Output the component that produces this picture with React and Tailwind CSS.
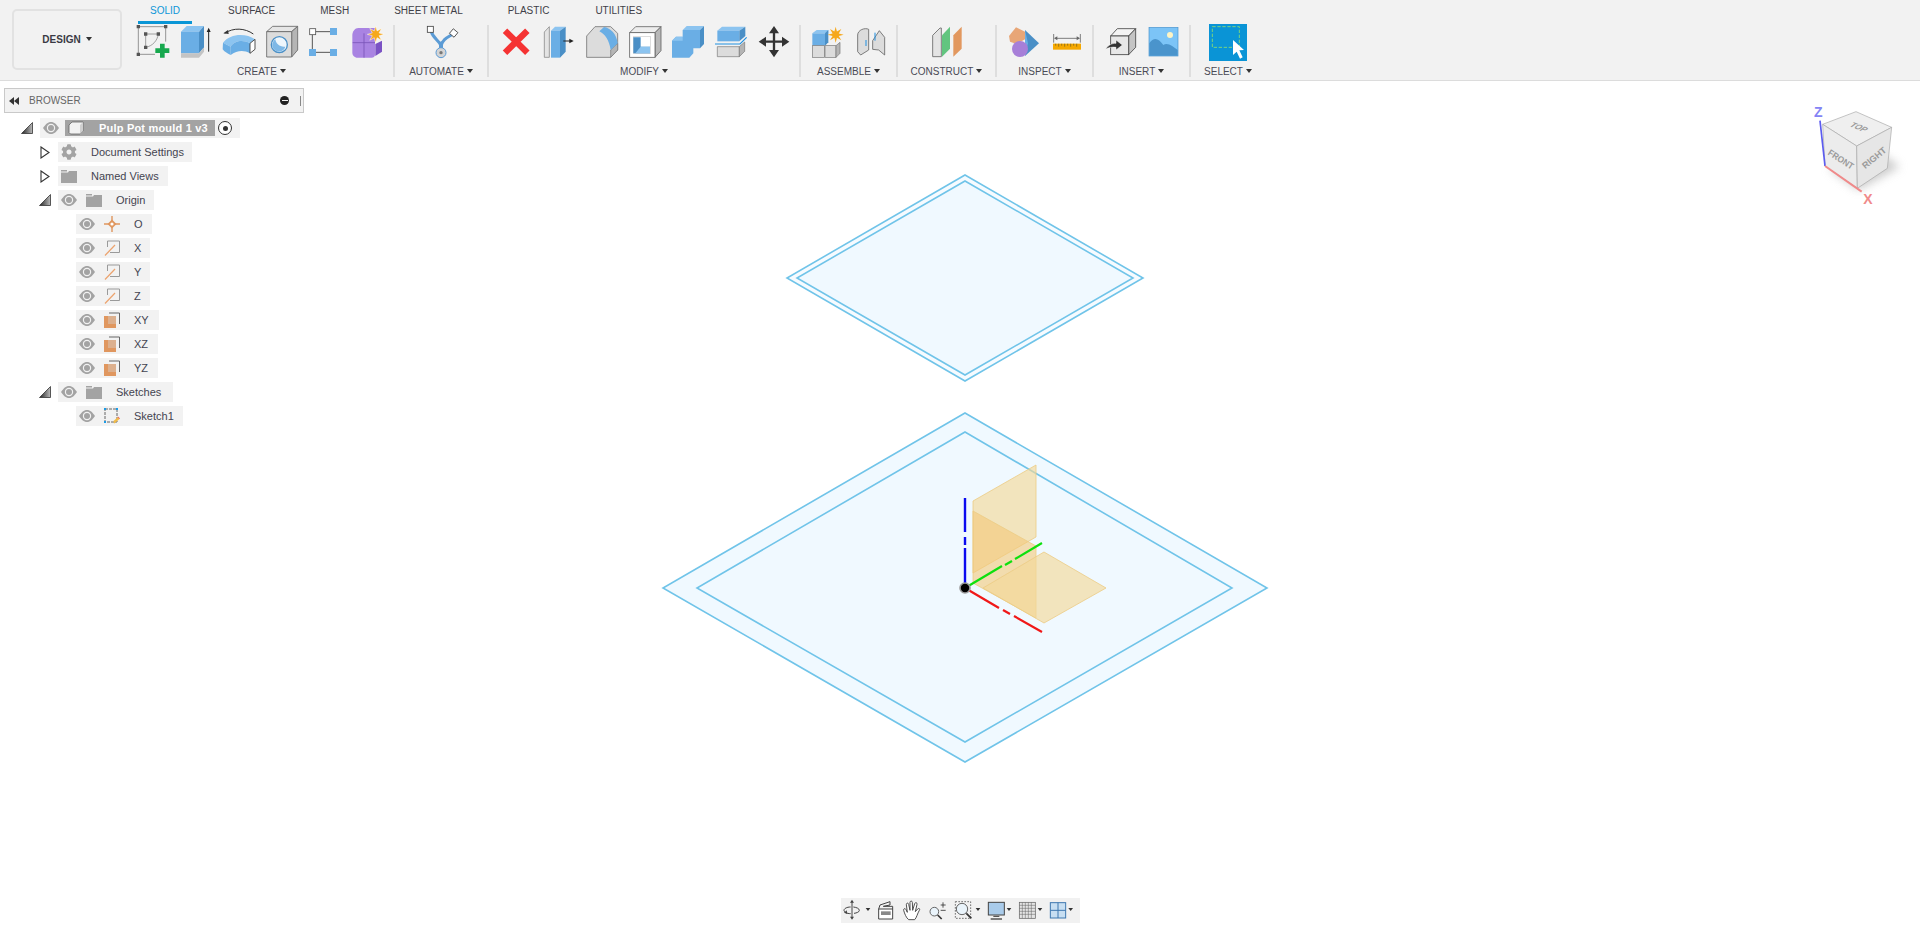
import React from 'react';
import { FaCog } from 'react-icons/fa';

// star points for the little "new" bursts on the ribbon icons
const star = (cx, cy, r1, r2, n = 8) => {
  const pts = [];
  for (let i = 0; i < n * 2; i++) {
    const r = i % 2 ? r2 : r1;
    const a = (Math.PI * i) / n - Math.PI / 2;
    pts.push(`${cx + r * Math.cos(a)},${cy + r * Math.sin(a)}`);
  }
  return pts.join(' ');
};

// ribbon icon, drawn at 3x so the numbers stay easy to read
function Ico({ x, children }) {
  return (
    <svg width="44" height="38" viewBox={`${x} 72 132 114`} className="shrink-0">
      {children}
    </svg>
  );
}

function Caret() {
  return <span className="ml-[3px] inline-block border-x-[3px] border-t-[4px] border-x-transparent border-t-[#333] align-[2px]" />;
}

function Group({ className, pad, label, children }) {
  return (
    <div className={`flex shrink-0 flex-col ${className}`}>
      <div className={`flex h-[38px] ${pad}`}>{children}</div>
      <div className="mt-[3px] text-center text-[10px] leading-[14px] text-[#4a4a55]">
        {label}
        <Caret />
      </div>
    </div>
  );
}

function Sep() {
  return <div className="mt-[1px] h-[52px] w-[2px] shrink-0 bg-[#dedede]" />;
}

function Tab({ label, active, className = '' }) {
  return (
    <div className={`relative px-[23px] text-[10px] leading-[20px] ${className}`}>
      <span className={active ? 'text-[#0c96d8]' : 'text-[#3f3f48]'}>{label}</span>
      {active && <div className="absolute bottom-[-3px] left-[11px] h-[3px] w-[54px] bg-[#0a96d6]" />}
    </div>
  );
}

function Toolbar() {
  return (
    <div className="flex h-[81px] shrink-0 border-b border-[#dcdcdc] bg-[#f2f2f2] font-['Liberation_Sans',sans-serif]">
      <div className="ml-[12px] mt-[9px] flex h-[61px] w-[110px] shrink-0 items-center justify-center rounded-[5px] border-2 border-[#e2e2e2] text-[10px] font-bold text-[#3a3a44]">
        DESIGN
        <span className="ml-[2px]"><Caret /></span>
      </div>
      <div className="ml-[5px] flex flex-col">
        <div className="flex h-[21px] pt-px">
          <Tab label="SOLID" active />
          <Tab label="SURFACE" className="ml-[2px]" />
          <Tab label="MESH" className="ml-[-1px]" />
          <Tab label="SHEET METAL" className="ml-[-1px]" />
          <Tab label="PLASTIC" className="ml-[-1px]" />
          <Tab label="UTILITIES" />
        </div>
        <div className="mt-[3px] ml-[3px] flex">
          <Group className="w-[263px]" pad="" label="CREATE">
            <Ico x={390}>
              <path d="M415 80H497V125M415 80V163H465" fill="none" stroke="#666" strokeWidth="2" />
              <path d="M437 102H475M437 102V142M475 102C472 122 458 138 437 142" fill="none" stroke="#777" strokeWidth="2" />
              <path d="M410 75h10v10h-10zM492 75h10v10h-10zM410 158h10v10h-10zM432 97h10v10h-10zM470 97h10v10h-10zM432 137h10v10h-10z" fill="#555" />
              <path d="M466 145h14v-14h14v14h14v14h-14v14h-14v-14h-14z" fill="#17a84e" />
            </Ico>
            <Ico x={522}>
              <path d="M543 95L560 78H612L597 95Z" fill="#8cc4f0" />
              <path d="M543 95H597V160H543Z" fill="#6aaee5" />
              <path d="M597 95L612 78V142L597 160Z" fill="#4a8fc6" />
              <path d="M543 160H597L612 142V155L597 173H543Z" fill="#c4c4c4" />
              <path d="M626 155V88" stroke="#222" strokeWidth="3" />
              <path d="M620 96L626 83L632 96Z" fill="#222" />
            </Ico>
            <Ico x={654}>
              <path d="M674 100C700 82 735 84 760 102" fill="none" stroke="#333" strokeWidth="3" />
              <path d="M670 100L684 90L686 102Z" fill="#333" />
              <path d="M669 128C690 100 738 98 765 118L750 130C730 118 702 122 692 140Z" fill="#8cc4f0" />
              <path d="M669 128L692 140V165C685 162 672 155 668 148Z" fill="#6aaee5" />
              <path d="M692 140C702 122 730 118 750 130V160C730 148 710 152 692 165Z" fill="#6aaee5" />
              <path d="M750 130L765 118V148L750 160Z" fill="#fff" stroke="#333" strokeWidth="2.5" />
            </Ico>
            <Ico x={786}>
              <path d="M800 95L818 79H893L875 95Z" fill="#e6e6e6" stroke="#666" strokeWidth="2.5" />
              <path d="M875 95L893 79V150L875 171Z" fill="#b5b5b5" stroke="#666" strokeWidth="2.5" />
              <path d="M800 95H875V171H800Z" fill="#dcdcdc" stroke="#666" strokeWidth="2.5" />
              <circle cx="838" cy="134" r="24" fill="#eef6fc" stroke="#4a8fc6" strokeWidth="4" />
              <path d="M826 118A20 20 0 1 0 856 140C840 142 828 132 826 118Z" fill="#7eb8e6" />
            </Ico>
            <Ico x={918}>
              <path d="M946 95H992M937 104V148M946 157H992" stroke="#555" strokeWidth="3" />
              <rect x="929" y="86" width="18" height="18" fill="#fff" stroke="#555" strokeWidth="2.5" />
              <rect x="990" y="84" width="21" height="21" fill="#6aaee5" />
              <rect x="927" y="147" width="21" height="21" fill="#6aaee5" />
              <rect x="990" y="147" width="21" height="21" fill="#6aaee5" />
            </Ico>
            <Ico x={1050}>
              <path d="M1075 84H1125V165C1125 170 1120 173 1115 173H1072C1064 173 1057 166 1057 158V105C1057 95 1065 84 1075 84Z" fill="#a983e2" />
              <path d="M1058 128H1125M1092 100V173" stroke="#7a55b8" strokeWidth="2.5" />
              <path d="M1126 132L1146 122V155L1126 168Z" fill="#7b52c4" />
              <polygon points={star(1127, 103, 25, 11, 8)} fill="#f6a81c" stroke="#fff" strokeWidth="1.5" />
            </Ico>
          </Group>
          <Sep />
          <Group className="w-[92px]" pad="pl-[25px]" label="AUTOMATE">
            <Ico x={1257}>
              <path d="M1290 92C1296 118 1314 118 1320 138M1356 102C1340 112 1324 118 1320 138" fill="none" stroke="#5b9bd5" strokeWidth="9" />
              <path d="M1320 125V150" stroke="#5b9bd5" strokeWidth="12" />
              <circle cx="1320" cy="158" r="15" fill="#d4d4d4" stroke="#5b9bd5" strokeWidth="3" />
              <circle cx="1320" cy="158" r="5" fill="#777" />
              <rect x="1279" y="79" width="18" height="18" fill="#fff" stroke="#444" strokeWidth="2.5" />
              <rect x="1349" y="90" width="18" height="18" fill="#fff" stroke="#444" strokeWidth="2.5" transform="rotate(40 1358 99)" />
            </Ico>
          </Group>
          <Sep />
          <Group className="w-[310px]" pad="pl-[1px]" label="MODIFY">
            <Ico x={30}>
              <path d="M75 92L142 158M142 92L75 158" stroke="#f53333" strokeWidth="19" />
            </Ico>
            <Ico x={162}>
              <path d="M193 96L208 80V172H193Z" fill="#e4e4e4" stroke="#777" strokeWidth="2" />
              <path d="M213 92L225 80H257L240 92Z" fill="#8cc4f0" />
              <path d="M213 92H240V173H213Z" fill="#6aaee5" />
              <path d="M240 92L257 80V155L240 173Z" fill="#4a8fc6" />
              <path d="M250 123H272" stroke="#222" strokeWidth="3" />
              <path d="M268 116L281 123L268 130Z" fill="#222" />
            </Ico>
            <Ico x={294}>
              <path d="M320 108L345 80H392L413 100V150L392 172H320Z" fill="#dcdcdc" stroke="#777" strokeWidth="2.5" />
              <path d="M392 172V150L413 130V150Z" fill="#b5b5b5" stroke="#777" strokeWidth="2" />
              <path d="M358 94L372 81C392 84 410 102 413 130L392 150C388 122 375 102 358 94Z" fill="#6aaee5" />
            </Ico>
            <Ico x={426}>
              <path d="M449 98L467 80H543L525 98Z" fill="#ededed" stroke="#666" strokeWidth="2.5" />
              <path d="M525 98L543 80V152L525 172Z" fill="#b8b8b8" stroke="#666" strokeWidth="2.5" />
              <rect x="449" y="98" width="76" height="74" fill="#fff" stroke="#666" strokeWidth="2.5" />
              <rect x="460" y="110" width="52" height="50" fill="#fff" stroke="#ccc" strokeWidth="2" />
              <path d="M460 112H482V140H510L510 160H460Z" fill="#4a8fc6" />
              <path d="M482 140H510V160H466Z" fill="#8cc4f0" />
            </Ico>
            <Ico x={558}>
              <path d="M608 90L620 78H672L660 90Z" fill="#8cc4f0" />
              <path d="M660 90L672 78V132L660 145Z" fill="#4a8fc6" />
              <path d="M576 122L588 110H608V90H660V145H640V160L628 173H576Z" fill="#6aaee5" />
              <path d="M576 122L588 110H608V122Z" fill="#8cc4f0" />
            </Ico>
            <Ico x={690}>
              <path d="M712 92L726 80H796L778 92Z" fill="#8cc4f0" />
              <path d="M712 92H778V124H712Z" fill="#6aaee5" />
              <path d="M778 92L796 80V108L778 124Z" fill="#4a8fc6" />
              <path d="M712 140H778V170H712Z" fill="#dcdcdc" stroke="#777" strokeWidth="2" />
              <path d="M778 140L794 126V154L778 170Z" fill="#b5b5b5" stroke="#777" strokeWidth="2" />
              <path d="M705 132H780L800 112" fill="none" stroke="#1f8fe0" strokeWidth="3.5" />
            </Ico>
            <Ico x={822}>
              <path d="M882 96V154M850 125H914" stroke="#333" strokeWidth="7" />
              <path d="M882 78L897 100H867ZM882 172L897 150H867ZM836 125L858 110V140ZM928 125L906 110V140Z" fill="#333" />
            </Ico>
          </Group>
          <Sep />
          <Group className="w-[95px]" pad="pl-[4px]" label="ASSEMBLE">
            <Ico x={975}>
              <path d="M997 100L1010 90H1045V100Z" fill="#8cc4f0" />
              <rect x="997" y="100" width="38" height="37" fill="#6aaee5" />
              <path d="M1035 100L1045 90V127L1035 137Z" fill="#4a8fc6" />
              <rect x="997" y="137" width="36" height="35" fill="#dcdcdc" stroke="#777" strokeWidth="2" />
              <rect x="1035" y="137" width="33" height="35" fill="#dcdcdc" stroke="#777" strokeWidth="2" />
              <path d="M1068 137L1080 127V160L1068 172Z" fill="#b5b5b5" stroke="#777" strokeWidth="2" />
              <polygon points={star(1067, 104, 24, 10, 8)} fill="#f6a81c" />
            </Ico>
            <Ico x={1107}>
              <path d="M1133 105C1133 90 1155 82 1166 88V150L1142 165L1133 155Z" fill="#dcdcdc" stroke="#666" strokeWidth="2.5" />
              <path d="M1178 122L1198 92L1214 112V165L1196 150L1178 148Z" fill="#dcdcdc" stroke="#666" strokeWidth="2.5" />
              <path d="M1158 120V138M1185 98V122" stroke="#1f8fe0" strokeWidth="3" />
            </Ico>
          </Group>
          <Sep />
          <Group className="w-[97px]" pad="pl-[28px]" label="CONSTRUCT">
            <Ico x={1338}>
              <path d="M1358 106L1380 84H1384V170H1358Z" fill="#e4e4e4" stroke="#666" strokeWidth="2.5" />
              <path d="M1386 106L1410 80V146L1386 170Z" fill="#62c57f" />
              <path d="M1420 106L1445 80V146L1420 170Z" fill="#e2985f" />
            </Ico>
          </Group>
          <Sep />
          <Group className="w-[95px]" pad="pl-[5px]" label="INSPECT">
            <Ico x={126}>
              <polygon points="147,108 168,82 195,95 195,118 170,132 150,125" fill="#e8a677" />
              <polygon points="195,90 237,130 195,168" fill="#4a8fc6" />
              <polygon points="195,90 204,130 195,168" fill="#6aaee5" />
              <circle cx="180" cy="147" r="24" fill="#a77fd8" />
            </Ico>
            <Ico x={258}>
              <path d="M281 102V128M361 102V128" stroke="#666" strokeWidth="2.5" />
              <path d="M286 115H356" stroke="#666" strokeWidth="2.5" />
              <path d="M282 115L292 109V121ZM360 115L350 109V121Z" fill="#666" />
              <rect x="279" y="131" width="84" height="18" fill="#f5a800" />
              <path d="M287 131v6M296 131v9M305 131v6M314 131v9M323 131v6M332 131v9M341 131v6M350 131v9" stroke="#6b5a20" strokeWidth="2" />
            </Ico>
          </Group>
          <Sep />
          <Group className="w-[95px]" pad="pl-[5px]" label="INSERT">
            <Ico x={417}>
              <path d="M452 108L472 86H527L506 108Z" fill="#f4f4f4" stroke="#444" strokeWidth="2.5" />
              <path d="M506 108L527 86V142L506 164Z" fill="#c4c4c4" stroke="#444" strokeWidth="2.5" />
              <rect x="452" y="108" width="54" height="56" fill="#e8e8e8" stroke="#444" strokeWidth="2.5" />
              <path d="M437 148C445 135 455 130 468 130V120L487 135L468 150V142C455 140 447 143 437 148Z" fill="#333" stroke="#fff" strokeWidth="1.5" />
            </Ico>
            <Ico x={549}>
              <rect x="567" y="82" width="87" height="86" fill="#7cc4f7" stroke="#4a94cc" strokeWidth="2" />
              <path d="M568 130C582 110 595 115 610 135C622 125 640 140 653 150V167H568Z" fill="#4a94cc" />
              <circle cx="630" cy="105" r="9" fill="#fff4c4" />
            </Ico>
          </Group>
          <Sep />
          <Group className="w-[74px]" pad="pl-[15px]" label="SELECT">
            <Ico x={738}>
              <rect x="747" y="69" width="114" height="114" fill="#0a94d6" />
              <rect x="757" y="80" width="81" height="62" fill="none" stroke="#8fe06f" strokeWidth="2.5" strokeDasharray="10 5" />
              <path d="M819 120V165L830 155L840 176L848 172L838 151L852 150Z" fill="#fff" />
            </Ico>
          </Group>
        </div>
      </div>
    </div>
  );
}

function Eye() {
  return (
    <svg width="16" height="12" viewBox="0 0 16 12" className="shrink-0">
      <path d="M0 6C3 1.5 5.5 0 8 0S13 1.5 16 6C13 10.5 10.5 12 8 12S3 10.5 0 6Z" fill="#a3a3a3" />
      <circle cx="8" cy="6" r="4.2" fill="#f2f2f2" />
      <circle cx="8" cy="6" r="3" fill="#a3a3a3" />
    </svg>
  );
}

function Folder() {
  return (
    <svg width="16" height="14" viewBox="0 0 16 14" className="shrink-0">
      <path d="M0 1H6V2.5H0ZM0 3.5H7L8 2H16V14H0Z" fill="#a3a3a3" />
    </svg>
  );
}

function Gear() {
  return <FaCog size={16} color="#a3a3a3" className="shrink-0" />;
}

function OriginPoint() {
  return (
    <svg width="16" height="16" viewBox="0 0 16 16" className="shrink-0">
      <path d="M8 0V5M8 11V16M0 8H5M11 8H16" stroke="#e0975f" strokeWidth="1.4" />
      <path d="M8 3.5L12.5 8L8 12.5L3.5 8Z" fill="#e0975f" />
      <circle cx="8" cy="8" r="1.6" fill="#fff" />
    </svg>
  );
}

function AxisIcon() {
  return (
    <svg width="16" height="16" viewBox="0 0 16 16" className="shrink-0">
      <path d="M3.5 1H15.5V12.5H6" fill="none" stroke="#9a9a9a" strokeWidth="1" />
      <path d="M3.5 1V7" stroke="#9a9a9a" strokeWidth="1" />
      <path d="M1 15.5L11 5" stroke="#eca36e" strokeWidth="1.2" />
    </svg>
  );
}

function PlaneIcon() {
  return (
    <svg width="16" height="16" viewBox="0 0 16 16" className="shrink-0">
      <path d="M5 1H15.5V12" fill="none" stroke="#666" strokeWidth="1" />
      <rect x="0" y="4" width="12" height="12" fill="#e0975f" />
      <rect x="4" y="4" width="8" height="8" fill="#dcb08e" />
    </svg>
  );
}

function SketchIcon() {
  return (
    <svg width="16" height="16" viewBox="0 0 16 16" className="shrink-0">
      <rect x="1" y="1" width="12" height="13" fill="none" stroke="#555" strokeWidth="0.9" strokeDasharray="3 1" />
      <path d="M0 0h2v2H0zM12 0h2v2h-2zM0 13h2v2H0z" fill="#1c9be6" />
      <path d="M10 15.5L9.5 13L14 9L15.5 11L11 15Z" fill="#f2bc4a" />
      <path d="M14 8.5L16 10.5L15.5 11L13.5 9Z" fill="#ea4f4f" />
    </svg>
  );
}

function Expander({ open }) {
  if (open) {
    return (
      <svg width="12" height="12" viewBox="0 0 12 12" className="ml-[1px]">
        <defs>
          <linearGradient id="tri" x1="0" y1="0" x2="1" y2="0">
            <stop offset="0" stopColor="#222" />
            <stop offset="1" stopColor="#bbb" />
          </linearGradient>
        </defs>
        <path d="M0.5 11.5L11.5 0.5V11.5Z" fill="url(#tri)" stroke="#333" strokeWidth="0.8" />
      </svg>
    );
  }
  return (
    <svg width="10" height="13" viewBox="0 0 10 13" className="ml-[2px]">
      <path d="M1 1L9 6.5L1 12Z" fill="#fff" stroke="#333" strokeWidth="1.1" />
    </svg>
  );
}

function Row({ level, exp, eye = true, icon, label, pad = 'pr-[9px]' }) {
  const indent = level === 1 ? 'pl-[32px]' : 'pl-[50px]';
  return (
    <div className={`flex h-5 ${indent}`}>
      <div className="flex w-[22px] shrink-0 items-center pl-[2px]">{exp && <Expander open={exp === 'open'} />}</div>
      <div className={`flex h-5 min-w-[74px] items-center bg-[#f2f2f2] pl-[3px] ${pad}`}>
        {eye && <Eye />}
        {eye ? <div className="ml-[9px] flex w-[16px] justify-center">{icon}</div> : <div className="flex w-[16px] justify-center">{icon}</div>}
        <span className="ml-[14px] whitespace-nowrap text-[11px] text-[#444450]">{label}</span>
      </div>
    </div>
  );
}

function BrowserPanel() {
  return (
    <div className="absolute left-[4px] top-[7px] w-[300px] font-['Liberation_Sans',sans-serif]">
      <div className="flex h-[25px] items-center border border-[#c9c9c9] bg-[#f2f2f2]">
        <svg width="10" height="8" viewBox="0 0 10 8" className="ml-[4px]">
          <path d="M0 4L5 0V8ZM5 4L10 0V8Z" fill="#333" />
        </svg>
        <span className="ml-[10px] text-[10px] text-[#666]">BROWSER</span>
        <div className="ml-auto mr-[11px] flex h-[9px] w-[9px] items-center justify-center rounded-full bg-[#222]">
          <div className="h-[1.5px] w-[6px] bg-[#f2f2f2]" />
        </div>
        <div className="mr-[2px] h-[10px] w-[1px] bg-[#888]" />
      </div>
      <div className="mt-[5px] flex flex-col gap-1">
        <div className="flex h-5 pl-[14px]">
          <div className="flex w-[22px] shrink-0 items-center pl-[2px]">
            <Expander open />
          </div>
          <div className="flex h-5 w-[200px] items-center bg-[#f2f2f2] pl-[3px]">
            <Eye />
            <div className="ml-[6px] flex h-4 w-[150px] items-center bg-[#a3a3a3]">
              <svg width="16" height="14" viewBox="0 0 16 14" className="ml-[3px] shrink-0">
                <path d="M1 4L4 1H15V10L12 13H2.5L1 11.5Z" fill="#f2f2f2" stroke="#666" strokeWidth="0.8" />
                <path d="M12 4L15 1V10L12 13Z" fill="#cfcfcf" />
              </svg>
              <span className="ml-[15px] whitespace-nowrap text-[11px] font-bold tracking-[0.2px] text-white">Pulp Pot mould 1 v3</span>
            </div>
            <div className="ml-[3px] flex h-[14px] w-[14px] items-center justify-center rounded-full border border-[#333] bg-white">
              <div className="h-[5px] w-[5px] rounded-full bg-[#333]" />
            </div>
          </div>
        </div>
        <Row level={1} exp="closed" eye={false} icon={<Gear />} label="Document Settings" pad="pr-[8px]" />
        <Row level={1} exp="closed" eye={false} icon={<Folder />} label="Named Views" />
        <Row level={1} exp="open" icon={<Folder />} label="Origin" />
        <Row level={2} icon={<OriginPoint />} label="O" />
        <Row level={2} icon={<AxisIcon />} label="X" />
        <Row level={2} icon={<AxisIcon />} label="Y" />
        <Row level={2} icon={<AxisIcon />} label="Z" />
        <Row level={2} icon={<PlaneIcon />} label="XY" pad="pr-[10px]" />
        <Row level={2} icon={<PlaneIcon />} label="XZ" pad="pr-[10px]" />
        <Row level={2} icon={<PlaneIcon />} label="YZ" pad="pr-[10px]" />
        <Row level={1} exp="open" icon={<Folder />} label="Sketches" pad="pr-[12px]" />
        <Row level={2} icon={<SketchIcon />} label="Sketch1" />
      </div>
    </div>
  );
}

function ViewCube() {
  return (
    <svg width="120" height="120" viewBox="0 0 360 360" className="absolute right-0 top-[9px]">
      <defs>
        <filter id="cubeShadow" x="-40%" y="-40%" width="180%" height="180%">
          <feGaussianBlur stdDeviation="14" />
        </filter>
      </defs>
      <polygon points="85,235 175,300 300,230 250,195" fill="#aaa" opacity="0.6" filter="url(#cubeShadow)" />
      <polygon points="68,103 168,65 275,112 170,168" fill="#efefef" stroke="#a8a8a8" strokeWidth="2" />
      <polygon points="68,103 170,168 172,295 75,228" fill="#ececec" stroke="#a8a8a8" strokeWidth="2" />
      <polygon points="170,168 275,112 262,235 172,295" fill="#e6e6e6" stroke="#a8a8a8" strokeWidth="2" />
      <text transform="translate(146,108) rotate(22) skewX(-30)" fontFamily="Liberation Sans, sans-serif" fontSize="24" fontWeight="700" fill="#9a9a9a" textLength="50" lengthAdjust="spacingAndGlyphs">TOP</text>
      <text transform="translate(82,193) rotate(33)" fontFamily="Liberation Sans, sans-serif" fontSize="27" fontWeight="700" fill="#9a9a9a" textLength="85" lengthAdjust="spacingAndGlyphs">FRONT</text>
      <text transform="translate(196,238) rotate(-40)" fontFamily="Liberation Sans, sans-serif" fontSize="27" fontWeight="700" fill="#9a9a9a" textLength="85" lengthAdjust="spacingAndGlyphs">RIGHT</text>
      <path d="M60 92L75 228" stroke="#5c5cf0" strokeWidth="5" />
      <path d="M75 228L185 305" stroke="#f08a8a" strokeWidth="6" />
      <text x="42" y="82" fontFamily="Liberation Sans, sans-serif" fontSize="42" fontWeight="700" fill="#8484f5">Z</text>
      <text x="190" y="342" fontFamily="Liberation Sans, sans-serif" fontSize="42" fontWeight="700" fill="#f08a8a">X</text>
    </svg>
  );
}

function Scene() {
  return (
    <svg width="1920" height="845" viewBox="0 81 1920 845" className="absolute left-0 top-0">
      <polygon points="965,175 1143,278 965,381 787,278" fill="#f6fbff" stroke="#70c4e9" strokeWidth="1.6" />
      <polygon points="965,181 1133,278 965,375 797,278" fill="#f0f9ff" stroke="#70c4e9" strokeWidth="1.6" />

      <polygon points="965,413 1267,588 965,762 663,588" fill="#f0f9ff" stroke="#70c4e9" strokeWidth="1.6" />
      <polygon points="965,432 1232,588 965,742 697,588" fill="#f0f9ff" stroke="#70c4e9" strokeWidth="1.6" />

      {/* origin planes */}
      <polygon points="973,501 1036,465 1036,537 973,573" fill="#f3d99a" fillOpacity="0.65" stroke="#eccb84" strokeWidth="0.8" />
      <polygon points="973,511 1036,546 1036,618 973,583" fill="#f3c878" fillOpacity="0.6" stroke="#eccb84" strokeWidth="0.8" />
      <polygon points="983,588 1044,552 1106,588 1044,623" fill="#f3d99a" fillOpacity="0.65" stroke="#eccb84" strokeWidth="0.8" />

      {/* axes */}
      <path d="M965 588V548M965 545V537M965 532V498" stroke="#0a0af0" strokeWidth="2.4" />
      <path d="M965 588L1002 566M1005 565L1012 561M1015 559L1042 543" stroke="#0ee00e" strokeWidth="2.2" />
      <path d="M965 588L999 608M1003 610L1010 614M1014 616L1042 632" stroke="#f01818" strokeWidth="2.2" />
      <circle cx="965" cy="588" r="5" fill="#000" stroke="#999" strokeWidth="1.6" />
    </svg>
  );
}

function NavIcon({ x, w, children }) {
  return (
    <svg width={w / 3} height="25" viewBox={`${x} 25 ${w} 75`} className="shrink-0">
      {children}
    </svg>
  );
}

const NavCaret = ({ x }) => <path d={`M${x} 55h14l-7 9z`} fill="#333" />;

function NavBar() {
  return (
    <div className="absolute bottom-[3px] left-[841px] flex h-[25px] w-[239px] bg-[#f1f1f1]">
      <NavIcon x={33} w={96}>
        <path d="M66 35V85" stroke="#444" strokeWidth="3" />
        <path d="M66 30l-6 9h12zM66 90l-6-9h12z" fill="#444" />
        <path d="M62 52C50 52 42 57 42 62S50 72 62 72M70 52C80 53 88 57 88 62S80 70 72 71" fill="none" stroke="#444" strokeWidth="3" />
        <path d="M50 62l-8 7 10 4z" fill="#444" />
        <NavCaret x={107} />
      </NavIcon>
      <NavIcon x={129} w={75}>
        <path d="M146 58V88H188V58Z" fill="#fff" stroke="#444" strokeWidth="3" />
        <path d="M146 58L150 46L180 36V46L160 50L188 50V58" fill="none" stroke="#444" strokeWidth="3" />
        <rect x="153" y="65" width="29" height="11" fill="#888" />
      </NavIcon>
      <NavIcon x={204} w={78}>
        <path d="M236 90C228 84 224 72 221 62C220 56 226 55 228 60L232 68L229 45C229 39 235 39 236 44L240 62L240 38C240 33 247 33 247 38L248 62L254 42C256 37 262 38 261 44L256 66L263 58C267 54 271 58 268 62C262 72 260 84 254 90Z" fill="#fff" stroke="#444" strokeWidth="2.8" />
      </NavIcon>
      <NavIcon x={282} w={78}>
        <circle cx="313" cy="66" r="13" fill="#eaf4fb" stroke="#666" strokeWidth="3" />
        <path d="M323 76L335 88" stroke="#333" strokeWidth="5" />
        <path d="M332 46H347M339 38V54M332 62H347" stroke="#333" strokeWidth="2.5" />
      </NavIcon>
      <NavIcon x={360} w={99}>
        <rect x="376" y="36" width="46" height="50" fill="none" stroke="#444" strokeWidth="2.2" strokeDasharray="5 4" />
        <circle cx="396" cy="58" r="17" fill="#eaf4fb" stroke="#666" strokeWidth="3" />
        <path d="M409 71L424 86" stroke="#333" strokeWidth="5" />
        <NavCaret x={437} />
      </NavIcon>
      <NavIcon x={459} w={96}>
        <rect x="475" y="38" width="48" height="38" fill="#a9cbea" stroke="#444" strokeWidth="3" />
        <path d="M490 80H508M482 88H516" stroke="#555" strokeWidth="4" />
        <NavCaret x={530} />
      </NavIcon>
      <NavIcon x={555} w={93}>
        <rect x="568" y="38" width="48" height="48" fill="#e4e4e4" stroke="#666" strokeWidth="2.2" />
        <path d="M577 38V86M586 38V86M595 38V86M604 38V86M568 47H616M568 56H616M568 65H616M568 74H616" stroke="#666" strokeWidth="1.6" />
        <NavCaret x={623} />
      </NavIcon>
      <NavIcon x={648} w={102}>
        <rect x="661" y="39" width="46" height="46" fill="#c8dff2" stroke="#3f78b0" strokeWidth="3" />
        <path d="M661 62H707M684 39V85" stroke="#3f78b0" strokeWidth="3" />
        <NavCaret x={715} />
      </NavIcon>
    </div>
  );
}

export default function App() {
  return (
    <div className="flex h-[926px] w-[1920px] flex-col overflow-hidden bg-white">
      <Toolbar />
      <div className="relative flex-1">
        <Scene />
        <BrowserPanel />
        <ViewCube />
        <NavBar />
      </div>
    </div>
  );
}
